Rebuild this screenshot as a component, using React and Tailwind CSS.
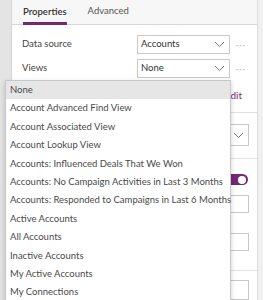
import React from "react";

const views = [
  "None",
  "Account Advanced Find View",
  "Account Associated View",
  "Account Lookup View",
  "Accounts: Influenced Deals That We Won",
  "Accounts: No Campaign Activities in Last 3 Months",
  "Accounts: Responded to Campaigns in Last 6 Months",
  "Active Accounts",
  "All Accounts",
  "Inactive Accounts",
  "My Active Accounts",
  "My Connections",
];

const Chevron = () => (
  <svg width="11" height="7" viewBox="0 0 11 7" fill="none" stroke="#777" strokeWidth="1">
    <path d="M1 1 L5.5 5.5 L10 1" />
  </svg>
);

const Select = ({ value }) => (
  <div className="w-[93px] h-[19px] border border-[#c8c8c8] bg-white flex items-center justify-between pl-[3px] pr-[4px]">
    <span className="text-[9.5px] text-[#333]">{value}</span>
    <Chevron />
  </div>
);

const Dots = () => (
  <span className="ml-[6px] text-[9px] tracking-[1px] text-[#b8b8b8] leading-none">···</span>
);

const App = () => {
  return (
    <div
      className="relative w-[263px] h-[300px] overflow-hidden bg-[#f0f0f0] flex"
      style={{ fontFamily: 'Lato, "Noto Sans", sans-serif' }}
    >
      {/* left gutter */}
      <div className="w-[12px] h-full bg-[#e4e4e4] border-r border-[#d4d4d4]" />

      {/* properties panel */}
      <div className="w-[246px] h-full bg-white border-r border-[#dcdcdc] flex flex-col">
        <div className="h-[27px] bg-[#f7f7f7] border-b border-[#d8d8d8] flex items-end pl-[11px] gap-[21px]">
          <div className="flex flex-col">
            <span className="text-[9.5px] font-semibold text-[#333] leading-none pb-[6px]">Properties</span>
            <div className="h-[3px] bg-[#742774] mb-[-1px]" />
          </div>
          <span className="text-[9.5px] text-[#555] leading-none pb-[9px]">Advanced</span>
        </div>

        <div className="flex items-center mt-[10px] pl-[10px]">
          <span className="w-[115px] text-[9.5px] text-[#444]">Data source</span>
          <Select value="Accounts" />
          <Dots />
        </div>
        <div className="flex items-center mt-[5px] pl-[10px]">
          <span className="w-[115px] text-[9.5px] text-[#444]">Views</span>
          <Select value="None" />
          <Dots />
        </div>

        <div className="flex justify-end pr-[15px] mt-[10px]">
          <span className="text-[10px] text-[#742774]">Edit</span>
        </div>
        <div className="mt-[9px] border-t border-[#e1e1e1]" />

        <div className="flex justify-end pr-[8px] mt-[11px]">
          <div className="w-[60px] h-[22px] border border-[#c8c8c8] flex items-center justify-end pr-[4px]">
            <Chevron />
          </div>
        </div>
        <div className="mt-[12px] border-t border-[#e1e1e1]" />

        <div className="flex justify-end pr-[9px] mt-[15px]">
          <div className="w-[30px] h-[11px] rounded-full bg-[#742774] flex items-center justify-end pr-[2px]">
            <div className="w-[8px] h-[8px] rounded-full bg-white" />
          </div>
        </div>

        <div className="flex justify-end pr-[8px] mt-[10px]">
          <div className="w-[60px] h-[18px] border border-[#c8c8c8]" />
        </div>
        <div className="flex justify-end pr-[8px] mt-[20px]">
          <div className="w-[60px] h-[18px] border border-[#c8c8c8]" />
        </div>
        <div className="flex justify-end pr-[10px] mt-[1px]">
          <span className="w-[20px] text-[8px] text-[#666]">t</span>
        </div>
        <div className="mt-[6px] border-t border-[#e1e1e1]" />
        <div className="flex justify-end pr-[8px] mt-[9px]">
          <div className="w-[60px] h-[20px] border border-[#c8c8c8] flex items-center justify-start pl-[2px]">
            <span className="text-[9px] text-[#555]">↳</span>
          </div>
        </div>
      </div>

      {/* open views menu */}
      <div className="absolute left-[5px] top-[80px] w-[226px] bg-white border border-[#c8c8c8] shadow-[0_2px_5px_rgba(0,0,0,0.2)]">
        {views.map((v, i) => (
          <div
            key={v}
            className={`h-[18.4px] flex items-center pl-[4px] text-[9.5px] text-[#4a4a4a] whitespace-nowrap ${
              i === 0 ? "bg-[#e6e6e6]" : ""
            }`}
          >
            {v}
          </div>
        ))}
      </div>
    </div>
  );
};

export default App;
